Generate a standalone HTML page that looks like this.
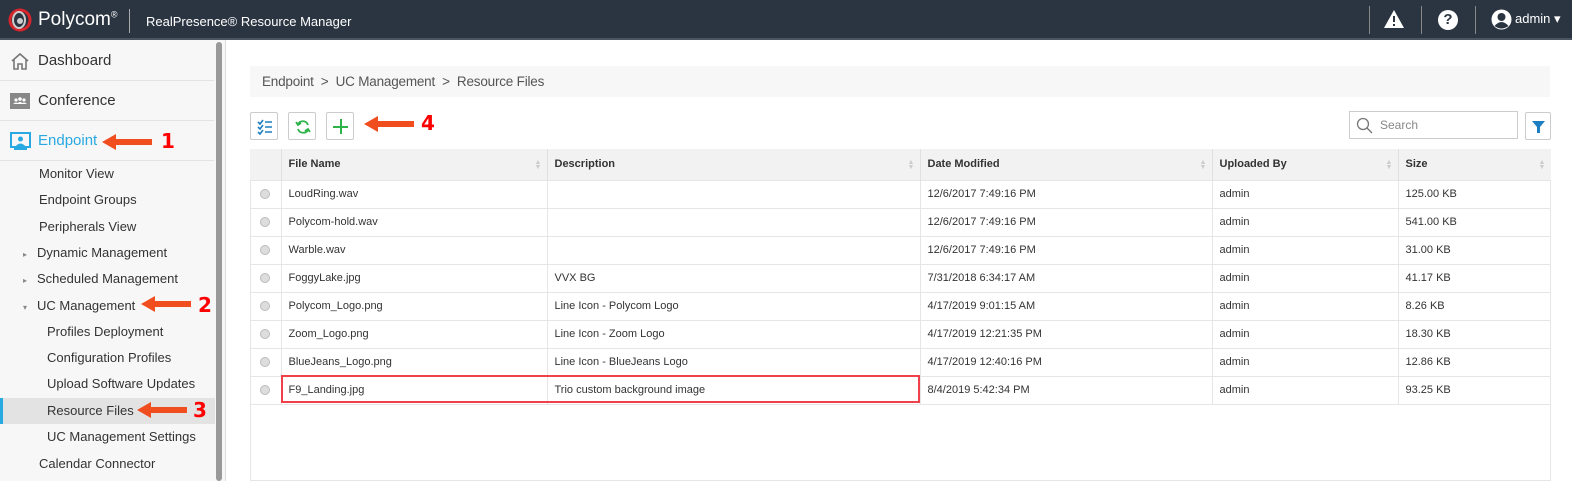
<!DOCTYPE html>
<html><head><meta charset="utf-8"><style>
*{box-sizing:border-box;margin:0;padding:0}
body{width:1572px;height:481px;overflow:hidden;background:#fff;font-family:"Liberation Sans",Arial,sans-serif;position:relative}
.hdr{position:absolute;left:0;top:0;width:1572px;height:40px;background:#2b3541;color:#fff;border-bottom:2px solid #4a5560}
.abs{position:absolute}
.side{position:absolute;left:0;top:40px;width:226px;height:441px;background:#f7f7f7;border-right:1px solid #ddd}
.top{position:absolute;left:0;width:214px;height:40px;border-bottom:1px solid #e3e3e3;font-size:15px;color:#333;padding-left:38px;line-height:40px}
.sub{position:absolute;font-size:13px;color:#333;line-height:26px;height:26px}
.num{position:absolute;color:#f00;font-weight:bold;font-size:20px;font-family:"DejaVu Sans",sans-serif}
.arrow{position:absolute}
table{border-collapse:collapse;font-size:11px;color:#333}
th{background:#f2f2f2;text-align:left;font-weight:bold;height:31px;padding-left:7px;border-right:1px solid #e0e0e0;position:relative}
td{height:28px;padding-left:7px;border-right:1px solid #e6e6e6;border-top:1px solid #e6e6e6}
.rad{width:10px;height:10px;border-radius:50%;background:#ddd;border:1px solid #bbb;margin-left:3px}
.sort{position:absolute;right:6px;top:11px;width:6px;height:10px;color:#ccc;font-size:7px;line-height:5px}
.btn{position:absolute;top:112px;width:28px;height:28px;border:1px solid #ccc;border-radius:2px;background:#fff}
</style></head><body>
<div class="hdr">
 <svg class="abs" style="left:7px;top:8px" width="26" height="24" viewBox="0 0 26 24"><circle cx="13" cy="12" r="10" fill="none" stroke="#d8242b" stroke-width="3"/><ellipse cx="12" cy="12" rx="6" ry="8" fill="none" stroke="#ccc" stroke-width="2"/><circle cx="13" cy="13" r="3" fill="#ccc"/></svg>
 <div class="abs" style="left:38px;top:9px;font-size:19px">Polycom<sup style="font-size:9px">®</sup></div>
 <div class="abs" style="left:129px;top:9px;width:1px;height:24px;background:#aaa"></div>
 <div class="abs" style="left:146px;top:14px;font-size:13px">RealPresence® Resource Manager</div>
 <div class="abs" style="left:1369px;top:6px;width:1px;height:28px;background:#888"></div>
 <div class="abs" style="left:1421px;top:6px;width:1px;height:28px;background:#888"></div>
 <div class="abs" style="left:1475px;top:6px;width:1px;height:28px;background:#888"></div>
 <svg class="abs" style="left:1383px;top:9px" width="22" height="20" viewBox="0 0 22 20"><path d="M11 1 L21 19 H1Z" fill="#fff"/><rect x="10" y="7" width="2" height="6" fill="#2b3541"/><rect x="10" y="15" width="2" height="2" fill="#2b3541"/></svg>
 <div class="abs" style="left:1438px;top:10px;width:20px;height:20px;border-radius:50%;background:#fff;color:#2b3541;font-weight:bold;font-size:15px;text-align:center;line-height:20px">?</div>
 <svg class="abs" style="left:1491px;top:9px" width="21" height="21" viewBox="0 0 21 21"><circle cx="10.5" cy="10.5" r="10" fill="#fff"/><circle cx="10.5" cy="8" r="4" fill="#2b3541"/><path d="M3.5 17 Q10.5 9 17.5 17 Q10.5 22 3.5 17Z" fill="#2b3541"/></svg>
 <div class="abs" style="left:1515px;top:11px;font-size:13px">admin ▾</div>
</div>
<div class="side">
 <div class="abs" style="left:216px;top:2px;width:6px;height:439px;background:#999;border-radius:3px"></div>
 <div class="top" style="top:1px"><svg class="abs" style="left:10px;top:11px" width="20" height="18" viewBox="0 0 20 18"><path d="M2 9 L10 2 L18 9 M4 8 V17 H8 V12 H12 V17 H16 V8" fill="none" stroke="#777" stroke-width="1.6"/></svg>Dashboard</div>
 <div class="top" style="top:41px"><svg class="abs" style="left:10px;top:12px" width="20" height="16" viewBox="0 0 20 16"><rect width="20" height="16" fill="#888"/><circle cx="6" cy="7" r="1.6" fill="#fff"/><circle cx="10" cy="6" r="1.8" fill="#fff"/><circle cx="14" cy="7" r="1.6" fill="#fff"/><path d="M3 11 Q6 8 9 11Z M7 11 Q10 7 13 11Z M11 11 Q14 8 17 11Z" fill="#fff"/></svg>Conference</div>
 <div class="top" style="top:81px;color:#29a9e1"><svg class="abs" style="left:10px;top:11px" width="21" height="18" viewBox="0 0 21 18"><rect x="1" y="1" width="19" height="14" fill="none" stroke="#29a9e1" stroke-width="2"/><circle cx="10.5" cy="7" r="2.5" fill="#29a9e1"/><path d="M5 15 Q10.5 8 16 15Z" fill="#29a9e1"/><rect x="4" y="16" width="13" height="2" fill="#29a9e1"/></svg>Endpoint</div>
 <div class="sub" style="left:39px;top:121px">Monitor View</div>
 <div class="sub" style="left:39px;top:147px">Endpoint Groups</div>
 <div class="sub" style="left:39px;top:174px">Peripherals View</div>
 <div class="sub" style="left:23px;top:200px"><span style="font-size:8px;color:#888;margin-right:10px">▸</span>Dynamic Management</div>
 <div class="sub" style="left:23px;top:226px"><span style="font-size:8px;color:#888;margin-right:10px">▸</span>Scheduled Management</div>
 <div class="sub" style="left:23px;top:253px"><span style="font-size:8px;color:#888;margin-right:10px">▾</span>UC Management</div>
 <div class="sub" style="left:47px;top:279px">Profiles Deployment</div>
 <div class="sub" style="left:47px;top:305px">Configuration Profiles</div>
 <div class="sub" style="left:47px;top:331px">Upload Software Updates</div>
 <div class="abs" style="left:0;top:358px;width:215px;height:26px;background:#e3e3e3;border-left:3px solid #29a9e1"></div>
 <div class="sub" style="left:47px;top:358px">Resource Files</div>
 <div class="sub" style="left:47px;top:384px">UC Management Settings</div>
 <div class="sub" style="left:39px;top:411px">Calendar Connector</div>
</div>
<div class="abs" style="left:250px;top:66px;width:1300px;height:31px;background:#f7f7f7;font-size:13.5px;color:#555;line-height:31px;padding-left:12px;letter-spacing:-0.2px">Endpoint &nbsp;&gt;&nbsp; UC Management &nbsp;&gt;&nbsp; Resource Files</div>
<div class="btn" style="left:250px"><svg style="position:absolute;left:6px;top:6px" width="16" height="16" viewBox="0 0 16 16" fill="none" stroke="#1d7fc1" stroke-width="1.6"><path d="M1 3 L3 5 L6 1 M1 8 L3 10 L6 6 M1 13 L3 15 L6 11 M8 3 H15 M8 8 H15 M8 13 H15"/></svg></div>
<div class="btn" style="left:288px"><svg style="position:absolute;left:6px;top:6px" width="16" height="16" viewBox="0 0 16 16" fill="none" stroke="#2db34a" stroke-width="1.8"><path d="M13 6 A5.5 5.5 0 0 0 3 5 M3 10 A5.5 5.5 0 0 0 13 11"/><path d="M1 3 L3 6 L6 4 M15 13 L13 10 L10 12"/></svg></div>
<div class="btn" style="left:326px"><div class="abs" style="left:6px;top:13px;width:15px;height:2px;background:#2db34a"></div><div class="abs" style="left:13px;top:6px;width:2px;height:15px;background:#2db34a"></div></div>
<div class="abs" style="left:1349px;top:111px;width:169px;height:28px;border:1px solid #ccc;font-size:12px;color:#888;line-height:26px;padding-left:30px"><svg class="abs" style="left:6px;top:5px" width="17" height="17" viewBox="0 0 17 17" fill="none" stroke="#777" stroke-width="1.3"><circle cx="7" cy="7" r="5.5"/><path d="M11 11 L16 16"/></svg>Search</div>
<div class="abs" style="left:1525px;top:112px;width:26px;height:28px;border:1px solid #ccc;border-radius:2px"><svg class="abs" style="left:6px;top:8px" width="13" height="12" viewBox="0 0 13 12" fill="#1d7fc1"><path d="M0 0 H13 L8 6 V12 H5 V6Z"/></svg></div>
<div class="abs" style="left:250px;top:149px;width:1301px;height:332px;border:1px solid #e6e6e6;border-top:none"></div>
<table class="abs" style="left:250px;top:149px;width:1301px;table-layout:fixed">
<tr><th style="width:31px"></th><th style="width:266px">File Name<span class="sort">▲<br>▼</span></th><th style="width:373px">Description<span class="sort">▲<br>▼</span></th><th style="width:292px">Date Modified<span class="sort">▲<br>▼</span></th><th style="width:186px">Uploaded By<span class="sort">▲<br>▼</span></th><th style="border-right:none">Size<span class="sort">▲<br>▼</span></th></tr>
<tr><td><div class="rad"></div></td><td>LoudRing.wav</td><td></td><td>12/6/2017 7:49:16 PM</td><td>admin</td><td>125.00 KB</td></tr>
<tr><td><div class="rad"></div></td><td>Polycom-hold.wav</td><td></td><td>12/6/2017 7:49:16 PM</td><td>admin</td><td>541.00 KB</td></tr>
<tr><td><div class="rad"></div></td><td>Warble.wav</td><td></td><td>12/6/2017 7:49:16 PM</td><td>admin</td><td>31.00 KB</td></tr>
<tr><td><div class="rad"></div></td><td>FoggyLake.jpg</td><td>VVX BG</td><td>7/31/2018 6:34:17 AM</td><td>admin</td><td>41.17 KB</td></tr>
<tr><td><div class="rad"></div></td><td>Polycom_Logo.png</td><td>Line Icon - Polycom Logo</td><td>4/17/2019 9:01:15 AM</td><td>admin</td><td>8.26 KB</td></tr>
<tr><td><div class="rad"></div></td><td>Zoom_Logo.png</td><td>Line Icon - Zoom Logo</td><td>4/17/2019 12:21:35 PM</td><td>admin</td><td>18.30 KB</td></tr>
<tr><td><div class="rad"></div></td><td>BlueJeans_Logo.png</td><td>Line Icon - BlueJeans Logo</td><td>4/17/2019 12:40:16 PM</td><td>admin</td><td>12.86 KB</td></tr>
<tr><td style="border-bottom:1px solid #e6e6e6"><div class="rad"></div></td><td style="border-bottom:1px solid #e6e6e6">F9_Landing.jpg</td><td style="border-bottom:1px solid #e6e6e6">Trio custom background image</td><td style="border-bottom:1px solid #e6e6e6">8/4/2019 5:42:34 PM</td><td style="border-bottom:1px solid #e6e6e6">admin</td><td style="border-bottom:1px solid #e6e6e6;border-right:none">93.25 KB</td></tr>
</table>
<div class="abs" style="left:281px;top:375px;width:639px;height:28px;border:2px solid #f0404a"></div>
<svg class="arrow" style="left:100px;top:132px" width="55" height="20"><path d="M2 10 L16 2 V7 H52 V13 H16 V18Z" fill="#f04e1f"/></svg>
<div class="num" style="left:161px;top:129px">1</div>
<svg class="arrow" style="left:139px;top:294px" width="55" height="20"><path d="M2 10 L16 2 V7 H52 V13 H16 V18Z" fill="#f04e1f"/></svg>
<div class="num" style="left:198px;top:293px">2</div>
<svg class="arrow" style="left:135px;top:400px" width="55" height="20"><path d="M2 10 L16 2 V7 H52 V13 H16 V18Z" fill="#f04e1f"/></svg>
<div class="num" style="left:193px;top:398px">3</div>
<svg class="arrow" style="left:362px;top:114px" width="55" height="20"><path d="M2 10 L16 2 V7 H52 V13 H16 V18Z" fill="#f04e1f"/></svg>
<div class="num" style="left:421px;top:111px">4</div>
</body></html>
